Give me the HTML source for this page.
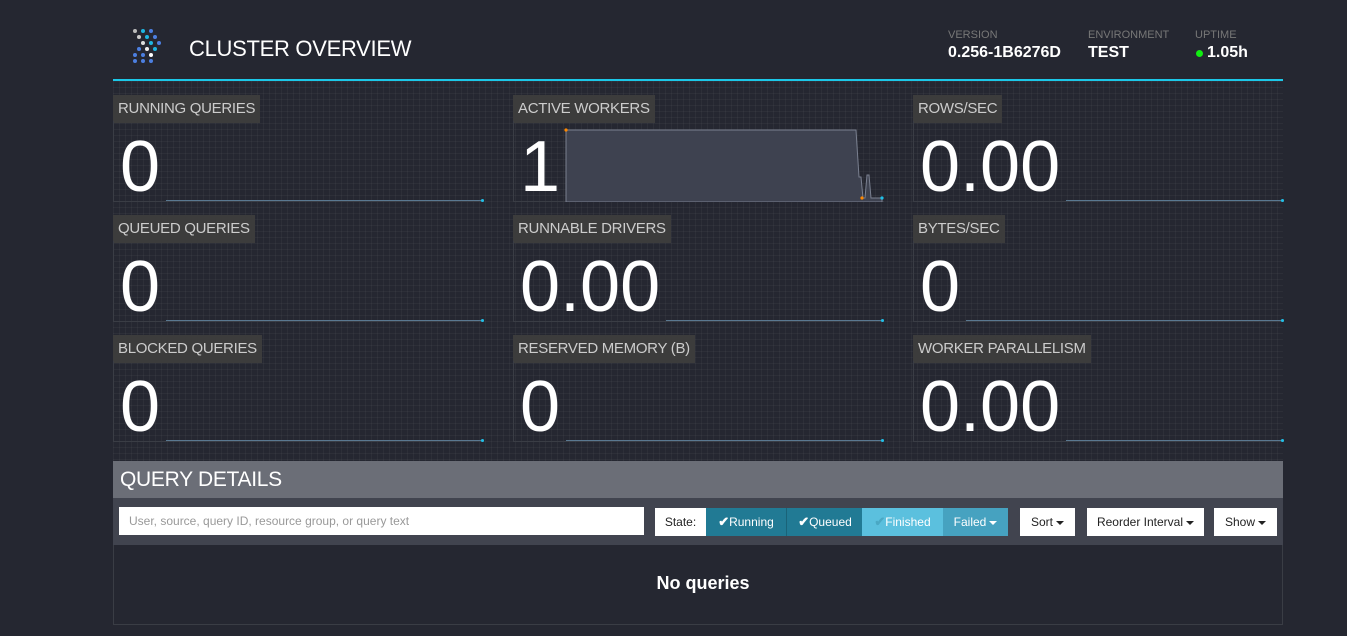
<!DOCTYPE html>
<html><head><style>
body{margin:0;background:#252731;font-family:"Liberation Sans",sans-serif;color:#fff;width:1347px;height:636px;overflow:hidden;position:relative}
.a{position:absolute}
.grid{background-color:#252731;background-image:linear-gradient(rgba(255,255,255,.035) 1px,transparent 1px),linear-gradient(90deg,rgba(255,255,255,.035) 1px,transparent 1px);background-size:6px 6px}
.lbl{position:absolute;height:28px;line-height:28px;background:#3c3c3c;color:#ccc;font-size:15px;padding:0 5px;letter-spacing:-0.3px}
.tile{position:absolute;width:370px;height:80px;border-left:1px solid #3a3d45;border-bottom:1px solid #3a3d45}
.num{position:absolute;left:6px;top:6px;font-size:72px;line-height:80px;color:#fff}
.spark{position:absolute;left:52px;right:2px;bottom:0;height:1px;background:#5a7890}
.spark:after{content:"";position:absolute;right:-2px;top:-1px;width:3px;height:3px;border-radius:50%;background:#1fc0e8}
.btn{position:absolute;top:508px;height:28px;line-height:28px;font-size:12px;text-align:center;color:#222;background:#fff}
.car{display:inline-block;border-left:4px solid transparent;border-right:4px solid transparent;border-top:4px solid currentColor;vertical-align:middle;margin-left:3px}
b.ck{font-size:13px}
</style></head><body>
<div class="a grid" style="left:113px;top:81px;width:1170px;height:380px"></div>
<svg class="a" style="left:131px;top:28px" width="36" height="36">
<g fill="#4c7fe0"><circle cx="4" cy="3" r="2" fill="#bbb"/><circle cx="12" cy="3" r="2" fill="#1fb5e0"/><circle cx="20" cy="3" r="2"/>
<circle cx="8" cy="9" r="2" fill="#ccc"/><circle cx="16" cy="9" r="2" fill="#1fb5e0"/><circle cx="24" cy="9" r="2"/>
<circle cx="12" cy="15" r="2" fill="#ddd"/><circle cx="20" cy="15" r="2" fill="#1fb5e0"/><circle cx="28" cy="15" r="2"/>
<circle cx="8" cy="21" r="2"/><circle cx="16" cy="21" r="2" fill="#eee"/><circle cx="24" cy="21" r="2" fill="#1fb5e0"/>
<circle cx="4" cy="27" r="2"/><circle cx="12" cy="27" r="2"/><circle cx="20" cy="27" r="2" fill="#fff"/>
<circle cx="4" cy="33" r="2"/><circle cx="12" cy="33" r="2"/><circle cx="20" cy="33" r="2"/></g></svg>
<div class="a" style="left:189px;top:36px;font-size:22px;letter-spacing:-0.3px">CLUSTER OVERVIEW</div>
<div class="a" style="left:948px;top:29px;font-size:11px;color:#777">VERSION</div>
<div class="a" style="left:948px;top:44px;font-size:16px;font-weight:bold">0.256-1B6276D</div>
<div class="a" style="left:1088px;top:29px;font-size:11px;color:#777">ENVIRONMENT</div>
<div class="a" style="left:1088px;top:44px;font-size:16px;font-weight:bold">TEST</div>
<div class="a" style="left:1195px;top:29px;font-size:11px;color:#777">UPTIME</div>
<div class="a" style="left:1196px;top:50px;width:7px;height:7px;border-radius:50%;background:#1e1"></div>
<div class="a" style="left:1207px;top:44px;font-size:16px;font-weight:bold">1.05h</div>
<div class="a" style="left:113px;top:79px;width:1170px;height:2px;background:#1cc8e8;z-index:5"></div>

<div class="lbl" style="left:113px;top:95px">RUNNING QUERIES</div>
<div class="tile" style="left:113px;top:121px"><div class="num">0</div><div class="spark"></div></div>
<div class="lbl" style="left:513px;top:95px">ACTIVE WORKERS</div>
<div class="tile" style="left:513px;top:121px"><div class="num">1</div>
<svg class="a" style="left:50px;top:6px" width="320" height="75"><path d="M2 3 H292 L295 50 H297 L299 71 L301 71 L303 48 L305 48 L307 71 H318 V75 H2 Z" fill="#3e4250" stroke="#7a8090" stroke-width="1"/><circle cx="2" cy="3" r="1.6" fill="#f80"/><circle cx="298" cy="71" r="1.6" fill="#f80"/><circle cx="318" cy="71" r="1.6" fill="#1fc0e8"/></svg></div>
<div class="lbl" style="left:913px;top:95px">ROWS/SEC</div>
<div class="tile" style="left:913px;top:121px"><div class="num">0.00</div><div class="spark" style="left:152px"></div></div>

<div class="lbl" style="left:113px;top:215px">QUEUED QUERIES</div>
<div class="tile" style="left:113px;top:241px"><div class="num">0</div><div class="spark"></div></div>
<div class="lbl" style="left:513px;top:215px">RUNNABLE DRIVERS</div>
<div class="tile" style="left:513px;top:241px"><div class="num">0.00</div><div class="spark" style="left:152px"></div></div>
<div class="lbl" style="left:913px;top:215px">BYTES/SEC</div>
<div class="tile" style="left:913px;top:241px"><div class="num">0</div><div class="spark"></div></div>

<div class="lbl" style="left:113px;top:335px">BLOCKED QUERIES</div>
<div class="tile" style="left:113px;top:361px"><div class="num">0</div><div class="spark"></div></div>
<div class="lbl" style="left:513px;top:335px">RESERVED MEMORY (B)</div>
<div class="tile" style="left:513px;top:361px"><div class="num">0</div><div class="spark"></div></div>
<div class="lbl" style="left:913px;top:335px">WORKER PARALLELISM</div>
<div class="tile" style="left:913px;top:361px"><div class="num">0.00</div><div class="spark" style="left:152px"></div></div>

<div class="a" style="left:113px;top:461px;width:1170px;height:37px;background:#6b6e77"></div>
<div class="a" style="left:120px;top:468px;font-size:21px;letter-spacing:-0.3px">QUERY DETAILS</div>
<div class="a" style="left:113px;top:498px;width:1170px;height:47px;background:#41444f"></div>
<div class="a" style="left:119px;top:507px;width:525px;height:28px;background:#fff;color:#999;font-size:12px;line-height:28px;text-indent:10px">User, source, query ID, resource group, or query text</div>
<div class="btn" style="left:655px;width:51px">State:</div>
<div class="btn" style="left:706px;width:80px;background:#217a94;color:#fff"><b class="ck">✔</b>Running</div>
<div class="btn" style="left:786px;width:76px;background:#217a94;color:#fff;border-left:1px solid #1a6378"><b class="ck">✔</b>Queued</div>
<div class="btn" style="left:862px;width:81px;background:#5bc0de;color:#fff"><b class="ck" style="color:#4aa8c4">✔</b>Finished</div>
<div class="btn" style="left:943px;width:65px;background:#46a2c0;color:#fff">Failed<span class="car"></span></div>
<div class="btn" style="left:1020px;width:55px">Sort<span class="car"></span></div>
<div class="btn" style="left:1087px;width:117px">Reorder Interval<span class="car"></span></div>
<div class="btn" style="left:1214px;width:63px">Show<span class="car"></span></div>
<div class="a" style="left:113px;top:545px;width:1168px;height:79px;border:1px solid #3a3d45;border-top:0"></div>
<div class="a" style="left:113px;top:573px;width:1180px;text-align:center;font-size:18px;font-weight:bold">No queries</div>
</body></html>
